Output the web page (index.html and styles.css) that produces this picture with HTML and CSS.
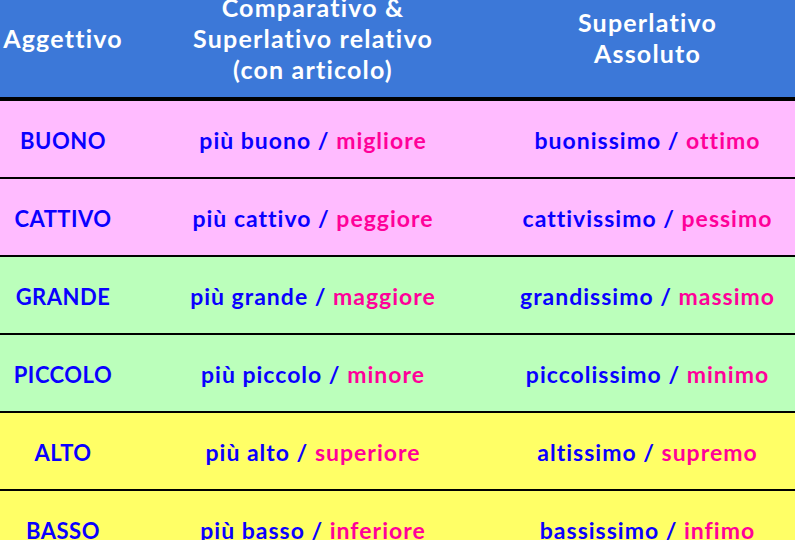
FILE: index.html
```html
<!DOCTYPE html>
<html>
<head>
<meta charset="utf-8">
<link rel="stylesheet" href="styles.css">
</head>
<body>
<div class="table">
  <div class="row head">
    <div class="cell c1"><span>Aggettivo</span></div>
    <div class="cell c2"><span>Comparativo &amp;<br>Superlativo relativo<br>(con articolo)</span></div>
    <div class="cell c3"><span>Superlativo<br>Assoluto</span></div>
  </div>
  <div class="row pink">
    <div class="cell c1"><span>BUONO</span></div>
    <div class="cell c2"><span>più buono / <b class="hl">migliore</b></span></div>
    <div class="cell c3"><span>buonissimo / <b class="hl">ottimo</b></span></div>
  </div>
  <div class="row pink">
    <div class="cell c1"><span>CATTIVO</span></div>
    <div class="cell c2"><span>più cattivo / <b class="hl">peggiore</b></span></div>
    <div class="cell c3"><span>cattivissimo / <b class="hl">pessimo</b></span></div>
  </div>
  <div class="row green">
    <div class="cell c1"><span>GRANDE</span></div>
    <div class="cell c2"><span>più grande / <b class="hl">maggiore</b></span></div>
    <div class="cell c3"><span>grandissimo / <b class="hl">massimo</b></span></div>
  </div>
  <div class="row green">
    <div class="cell c1"><span>PICCOLO</span></div>
    <div class="cell c2"><span>più piccolo / <b class="hl">minore</b></span></div>
    <div class="cell c3"><span>piccolissimo / <b class="hl">minimo</b></span></div>
  </div>
  <div class="row yellow">
    <div class="cell c1"><span>ALTO</span></div>
    <div class="cell c2"><span>più alto / <b class="hl">superiore</b></span></div>
    <div class="cell c3"><span>altissimo / <b class="hl">supremo</b></span></div>
  </div>
  <div class="row yellow">
    <div class="cell c1"><span>BASSO</span></div>
    <div class="cell c2"><span>più basso / <b class="hl">inferiore</b></span></div>
    <div class="cell c3"><span>bassissimo / <b class="hl">infimo</b></span></div>
  </div>
</div>
</body>
</html>
```
FILE: styles.css
```css
html, body {
  margin: 0;
  padding: 0;
  overflow: hidden;
  background: #ffffff;
}
.table {
  width: 795px;
  font-family: "Lato", "DejaVu Sans", sans-serif;
  font-weight: bold;
}
.row {
  display: grid;
  grid-template-columns: 126px 374px 295px;
  grid-template-rows: 76px;
  border-bottom: 2px solid #000;
  text-align: center;
  font-size: 23px;
  letter-spacing: 1px;
  color: #0a00ff;
}
.cell {
  display: flex;
  align-items: center;
  justify-content: center;
  height: 76px;
  padding-top: 2px;
  box-sizing: border-box;
}
.row .c1 {
  font-size: 22px;
  letter-spacing: 0.5px;
}
.head {
  padding-bottom: 21px;
  border-bottom: 4px solid #000;
  background: #3c78d8;
  color: #ffffff;
  line-height: 31px;
}
.head .cell {
  padding-top: 0;
}
.head .cell,
.head .c1 {
  font-size: 25px;
  letter-spacing: 1.2px;
}
.pink { background: #ffbbff; }
.green { background: #bbffbb; }
.yellow { background: #ffff66; }
.hl {
  color: #ff0099;
  font-weight: bold;
}
```
